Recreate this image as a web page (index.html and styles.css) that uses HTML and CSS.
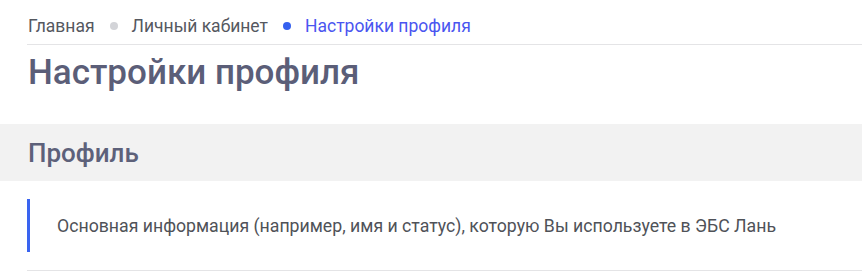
FILE: index.html
```html
<!DOCTYPE html>
<html lang="ru">
<head>
<meta charset="utf-8">
<title>Настройки профиля</title>
<link rel="stylesheet" href="styles.css">
</head>
<body>
<div class="page">
  <nav class="crumbs">
    <a class="crumb" href="#">Главная</a>
    <span class="sep"></span>
    <a class="crumb" href="#">Личный кабинет</a>
    <span class="sep sep-active"></span>
    <span class="crumb crumb-active">Настройки профиля</span>
  </nav>
  <h1 class="title">Настройки профиля</h1>
</div>
<section class="band">
  <h2 class="band-title">Профиль</h2>
</section>
<div class="page">
  <div class="note">
    <p class="note-text">Основная информация (например, имя и статус), которую Вы используете в ЭБС Лань</p>
  </div>
  <div class="rule"></div>
</div>
</body>
</html>
```
FILE: styles.css
```css
html, body {
  margin: 0;
  padding: 0;
  background: #ffffff;
  font-family: Roboto, "Noto Sans", sans-serif;
}
.page {
  padding-left: 27px;
}
.crumbs {
  display: flex;
  align-items: center;
  height: 45px;
  padding-top: 8px;
  box-sizing: border-box;
  border-bottom: 1px solid #e4e4e6;
  padding-left: 1px;
}
.crumb {
  font-size: 17.5px;
  color: #55585f;
  text-decoration: none;
}
.crumb-active {
  color: #4a55f0;
}
.sep {
  width: 8px;
  height: 8px;
  border-radius: 50%;
  background: #d3d4d8;
  margin: 0 14px 0 15px;
}
.sep-active {
  background: #3560ef;
}
.title {
  margin: 0;
  padding-left: 1px;
  font-size: 35px;
  font-weight: 500;
  color: #5b5e78;
  line-height: 56px;
}
.band {
  margin-top: 23px;
  background: #f2f2f2;
  height: 57px;
  display: flex;
  align-items: center;
  padding-left: 28px;
}
.band-title {
  margin: 0;
  font-size: 26px;
  font-weight: 500;
  color: #5d617a;
}
.note {
  margin-top: 18px;
  border-left: 3px solid #3a64f0;
  height: 53px;
  display: flex;
  align-items: center;
  padding-left: 27px;
}
.note-text {
  margin: 0;
  font-size: 17.7px;
  color: #4f5258;
}
.rule {
  margin-top: 18px;
  border-top: 1px solid #e4e4e6;
}
```
